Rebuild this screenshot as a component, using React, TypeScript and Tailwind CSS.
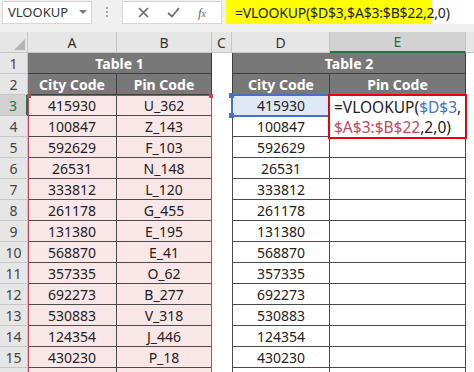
import React from "react";

const tableRows: [string, string][] = [
  ["415930", "U_362"],
  ["100847", "Z_143"],
  ["592629", "F_103"],
  ["26531", "N_148"],
  ["333812", "L_120"],
  ["261178", "G_455"],
  ["131380", "E_195"],
  ["568870", "E_41"],
  ["357335", "O_62"],
  ["692273", "B_277"],
  ["530883", "V_318"],
  ["124354", "J_446"],
  ["430230", "P_18"],
  ["", ""],
];

const font = { fontFamily: '"Noto Sans", "Open Sans", sans-serif' };

export default function App() {
  return (
    <div className="relative w-[474px] h-[372px] overflow-hidden bg-white text-[#222]" style={font}>
      {/* formula bar */}
      <div className="flex h-[32px] bg-[#f0f0f0] items-start">
        <div className="ml-[2px] mt-[1px] w-[90px] h-[23px] bg-white border border-[#d6d6d6] flex items-center pl-[5px] pr-[4px] justify-between">
          <span className="text-[13px] text-[#333]">VLOOKUP</span>
          <svg width="8" height="5" viewBox="0 0 8 5"><path d="M0 0 L8 0 L4 4 Z" fill="#777" /></svg>
        </div>
        <div className="w-[30px] h-[24px] flex flex-col items-center justify-center gap-[2px]">
          <span className="w-[2px] h-[2px] bg-[#aaa]" />
          <span className="w-[2px] h-[2px] bg-[#aaa]" />
          <span className="w-[2px] h-[2px] bg-[#aaa]" />
        </div>
        <div className="mt-[1px] w-[100px] h-[23px] bg-white border border-[#d6d6d6] flex items-center justify-around px-[6px]">
          <svg width="11" height="11" viewBox="0 0 11 11"><path d="M1 1 L10 10 M10 1 L1 10" stroke="#6a6a6a" strokeWidth="1.6" /></svg>
          <svg width="13" height="11" viewBox="0 0 13 11"><path d="M1 6 L5 9.5 L12 1" stroke="#6a6a6a" strokeWidth="1.8" fill="none" /></svg>
          <span className="text-[13px] italic text-[#666]" style={{ fontFamily: '"Liberation Serif", serif' }}>f<span className="text-[10px]">x</span></span>
        </div>
        <div className="ml-[4px] flex-1 h-[24px] bg-white flex items-stretch">
          <div className="w-[206px] bg-[#ffff00] flex items-center pl-[9px] text-[14px] tracking-[-0.2px] text-[#222]">
            =VLOOKUP($D$3,$A$3:$B$22,2,0)
          </div>
        </div>
      </div>

      {/* sheet grid */}
      <div className="grid grid-cols-[28px_89px_95px_20px_98px_136px_1fr] auto-rows-[21px] text-[14px]">
        {/* column headers */}
        <div className="bg-[#e6e6e6] border-r border-b border-[#c6c6c6] relative">
          <svg className="absolute right-[2px] bottom-[2px]" width="11" height="11" viewBox="0 0 11 11"><path d="M11 0 L11 11 L0 11 Z" fill="#b4b4b4" /></svg>
        </div>
        <div className="bg-[#e6e6e6] border-r border-b border-[#c6c6c6] flex items-center justify-center text-[#333]">A</div>
        <div className="bg-[#e6e6e6] border-r border-b border-[#c6c6c6] flex items-center justify-center text-[#333]">B</div>
        <div className="bg-[#e6e6e6] border-r border-b border-[#c6c6c6] flex items-center justify-center text-[#333]">C</div>
        <div className="bg-[#e6e6e6] border-r border-b border-[#c6c6c6] flex items-center justify-center text-[#333]">D</div>
        <div className="bg-[#d2d2d2] border-r border-[#c6c6c6] border-b-2 border-b-[#217346] flex items-center justify-center text-[#217346]">E</div>
        <div className="bg-[#e6e6e6] border-b border-[#c6c6c6]" />

        {/* row 1 */}
        <div className="bg-[#e6e6e6] border-r border-b border-[#c6c6c6] flex items-center justify-center text-[#444]">1</div>
        <div className="col-span-2 bg-[#787878] border-r border-b border-[#3f3f3f] flex items-center justify-center text-white font-bold">Table 1</div>
        <div className="bg-white" />
        <div className="col-span-2 bg-[#787878] border-l border-r border-b border-[#3f3f3f] flex items-center justify-center text-white font-bold">Table 2</div>
        <div className="bg-white" />

        {/* row 2 */}
        <div className="bg-[#e6e6e6] border-r border-b border-[#c6c6c6] flex items-center justify-center text-[#444]">2</div>
        <div className="bg-[#787878] border-r border-b border-[#3f3f3f] flex items-center justify-center text-white font-bold">City Code</div>
        <div className="bg-[#787878] border-r border-b border-[#3f3f3f] flex items-center justify-center text-white font-bold">Pin Code</div>
        <div className="bg-white" />
        <div className="bg-[#787878] border-l border-r border-b border-[#3f3f3f] flex items-center justify-center text-white font-bold">City Code</div>
        <div className="bg-[#787878] border-r border-b border-[#3f3f3f] flex items-center justify-center text-white font-bold">Pin Code</div>
        <div className="bg-white" />

        {tableRows.map(([city, pin], i) => {
          const r = i + 3;
          const sel = r === 3;
          return (
            <React.Fragment key={r}>
              <div
                className={
                  sel
                    ? "bg-[#d2d2d2] border-r-2 border-r-[#217346] border-b border-b-[#c6c6c6] flex items-center justify-center text-[#217346]"
                    : "bg-[#e6e6e6] border-r border-b border-[#c6c6c6] flex items-center justify-center text-[#444]"
                }
              >
                {r <= 15 ? r : ""}
              </div>
              <div className="bg-[#f9e7e7] border-r border-b border-[#4a4a4a] flex items-center justify-center">{city}</div>
              <div className="bg-[#f9e7e7] border-r border-b border-[#4a4a4a] flex items-center justify-center">{pin}</div>
              <div className="bg-white" />
              <div className={(sel ? "bg-[#dfe8f6] " : "bg-white ") + "border-l border-r border-b border-[#4a4a4a] flex items-center justify-center"}>{city}</div>
              <div className="bg-white border-r border-b border-[#4a4a4a]" />
              <div className="bg-white" />
            </React.Fragment>
          );
        })}
      </div>

      {/* range highlight $A$3:$B$22 */}
      <div className="absolute left-[28px] top-[95px] w-[184px] h-[290px] border border-[#c0475a]" />
      <div className="absolute left-[27px] top-[94px] w-[4px] h-[4px] bg-[#c0475a]" />
      <div className="absolute left-[209px] top-[94px] w-[4px] h-[4px] bg-[#c0475a]" />

      {/* $D$3 highlight */}
      <div className="absolute left-[231px] top-[94px] w-[99px] h-[23px] border-2 border-[#4472c4]" />
      <div className="absolute left-[229px] top-[93px] w-[5px] h-[5px] bg-[#4472c4]" />
      <div className="absolute left-[229px] top-[113px] w-[5px] h-[5px] bg-[#4472c4]" />

      {/* active cell with formula */}
      <div className="absolute left-[328px] top-[94px] w-[139px] h-[45px] border-2 border-[#e8000b] bg-white pl-[4px] pt-[1px] text-[15.5px] leading-[20px] text-[#222]">
        <div>
          =VLOOKUP(<span className="text-[#4472c4]">$D$3</span>,
        </div>
        <div>
          <span className="text-[#c0475a]">$A$3:$B$22</span>,2,0)
        </div>
      </div>
    </div>
  );
}
